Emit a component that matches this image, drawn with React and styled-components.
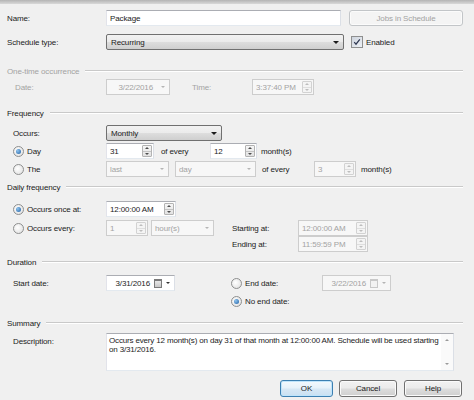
import React from 'react';
import styled, { createGlobalStyle, css } from 'styled-components';

const Global = createGlobalStyle`
  html, body { margin: 0; padding: 0; background: #f0f0f0; }
  body {
    font-family: 'Liberation Sans', Arial, sans-serif;
    font-size: 8px;
    letter-spacing: -0.12px;
    color: #1b1b1b;
  }
`;

const Dialog = styled.div`
  width: 474px;
  height: 400px;
  background: #f0f0f0;
  overflow: hidden;
  box-sizing: border-box;
`;

const TopBand = styled.div`
  height: 4px;
  background: linear-gradient(#b4b4b4, #d9d9d9);
`;

const Content = styled.div`
  display: flex;
  flex-direction: column;
  padding: 0 11px 0 7px;
`;

const Row = styled.div`
  display: flex;
  align-items: ${p => (p.$top ? 'flex-start' : 'center')};
  height: ${p => p.$h || 16}px;
  margin-top: ${p => p.$mt || 0}px;
  padding-left: ${p => p.$indent || 0}px;
  justify-content: ${p => (p.$end ? 'flex-end' : 'flex-start')};
`;

const Split = styled.div`
  display: flex;
`;

const Col = styled.div`
  display: flex;
  flex-direction: column;
  width: ${p => (p.$w ? `${p.$w}px` : 'auto')};
  flex-shrink: 0;
`;

const Label = styled.div`
  width: ${p => (p.$w ? `${p.$w}px` : 'auto')};
  margin-left: ${p => p.$ml || 0}px;
  margin-top: ${p => p.$mt || 0}px;
  flex-shrink: 0;
  white-space: nowrap;
  color: ${p => (p.$disabled ? '#a3a3a3' : '#1b1b1b')};
`;

const GroupHeader = styled.div`
  display: flex;
  align-items: center;
  height: 12px;
  margin-top: ${p => p.$mt || 0}px;
  color: ${p => (p.$disabled ? '#a3a3a3' : '#1b1b1b')};
  white-space: nowrap;
`;

const GroupLine = styled.div`
  flex: 1;
  margin-left: 6px;
  border-top: 1px solid #c9c9c9;
  border-bottom: 1px solid #ffffff;
`;

const boxBase = css`
  box-sizing: border-box;
  height: 16px;
  width: ${p => p.$w}px;
  margin-left: ${p => p.$ml || 0}px;
  flex-shrink: 0;
  display: flex;
  align-items: center;
  white-space: nowrap;
`;

const TextBox = styled.div`
  ${boxBase};
  border: 1px solid;
  border-color: ${p => (p.$disabled ? '#cdcdcd' : '#abadb3 #dbdfe6 #e3e9ef #e2e3ea')};
  background: ${p => (p.$disabled ? '#f7f7f7' : '#ffffff')};
  color: ${p => (p.$disabled ? '#a3a3a3' : '#1b1b1b')};
  padding-left: 3px;
`;

const BoxText = styled.span`
  flex: 1;
  text-align: ${p => (p.$right ? 'right' : 'left')};
  padding-right: ${p => (p.$right ? 4 : 0)}px;
  overflow: hidden;
`;

const ComboButton = styled.div`
  ${boxBase};
  border: 1px solid #707070;
  border-radius: 2px;
  background: linear-gradient(#f2f2f2 0%, #ebebeb 48%, #dddddd 52%, #cfcfcf 100%);
  padding-left: 4px;
  padding-right: 4px;
`;

const Arrow = styled.span`
  width: 0;
  height: 0;
  flex-shrink: 0;
  margin-left: ${p => p.$ml || 0}px;
  border-left: ${p => p.$s || 3}px solid transparent;
  border-right: ${p => p.$s || 3}px solid transparent;
  border-top: ${p => p.$s || 3}px solid ${p => p.$c || '#1b1b1b'};
`;

const ArrowCell = styled.span`
  width: 12px;
  align-self: stretch;
  display: flex;
  align-items: center;
  justify-content: center;
  flex-shrink: 0;
`;

const SpinBox = styled.span`
  box-sizing: border-box;
  width: 10px;
  height: 12px;
  margin-right: 1px;
  flex-shrink: 0;
  display: flex;
  flex-direction: column;
  border: 1px solid ${p => (p.$disabled ? '#d2d2d2' : '#b3b3b3')};
  border-radius: 1px;
  background: ${p => (p.$disabled ? '#f4f4f4' : 'linear-gradient(#f6f6f6, #e2e2e2)')};
`;

const SpinHalf = styled.span`
  flex: 1;
  display: flex;
  align-items: center;
  justify-content: center;
  border-top: ${p => (p.$lower ? `1px solid ${p.$disabled ? '#dedede' : '#c4c4c4'}` : 'none')};
`;

const Tri = styled.span`
  width: 0;
  height: 0;
  border-left: 2px solid transparent;
  border-right: 2px solid transparent;
  ${p =>
    p.$up
      ? `border-bottom: 2px solid ${p.$disabled ? '#bdbdbd' : '#4d4d4d'};`
      : `border-top: 2px solid ${p.$disabled ? '#bdbdbd' : '#4d4d4d'};`}
`;

const Button = styled.div`
  box-sizing: border-box;
  height: ${p => p.$h || 17}px;
  width: ${p => p.$w}px;
  margin-left: ${p => p.$ml || 0}px;
  flex-shrink: 0;
  display: flex;
  align-items: center;
  justify-content: center;
  border: 1px solid ${p => (p.$disabled ? '#c2c5c8' : p.$default ? '#3c7fb1' : '#707070')};
  border-radius: 3px;
  color: ${p => (p.$disabled ? '#a3a3a3' : '#1b1b1b')};
  background: ${p =>
    p.$disabled
      ? '#f4f4f4'
      : p.$default
      ? 'linear-gradient(#f3f9fd 0%, #e6f1fa 48%, #d7e8f5 52%, #c9e0f2 100%)'
      : 'linear-gradient(#f2f2f2 0%, #ebebeb 48%, #dddddd 52%, #cfcfcf 100%)'};
  box-shadow: ${p => (p.$default ? 'inset 0 0 0 1px #bfe4fb' : 'inset 0 0 0 1px #fbfbfb')};
`;

const CheckBox = styled.span`
  box-sizing: border-box;
  width: 12px;
  height: 12px;
  margin-left: ${p => p.$ml || 0}px;
  flex-shrink: 0;
  border: 1px solid #8e8f8f;
  background: linear-gradient(135deg, #cdd3dd, #eef1f5);
  display: flex;
  align-items: center;
  justify-content: center;
`;

const RadioItem = styled.div`
  display: flex;
  align-items: center;
  width: ${p => p.$w}px;
  flex-shrink: 0;
  white-space: nowrap;
`;

const Radio = styled.span`
  box-sizing: border-box;
  width: 11px;
  height: 11px;
  border-radius: 50%;
  margin-right: 3px;
  flex-shrink: 0;
  border: 1px solid #8e8f8f;
  background: radial-gradient(circle at 40% 40%, #ffffff, #dcdcdc);
  display: flex;
  align-items: center;
  justify-content: center;
`;

const RadioDot = styled.span`
  width: 5px;
  height: 5px;
  border-radius: 50%;
  background: radial-gradient(circle at 35% 35%, #8ec3ee, #1f5fa3);
`;

const TextArea = styled.div`
  box-sizing: border-box;
  width: ${p => p.$w}px;
  height: ${p => p.$h}px;
  flex-shrink: 0;
  display: flex;
  border: 1px solid;
  border-color: #abadb3 #dbdfe6 #e3e9ef #e2e3ea;
  background: #ffffff;
`;

const TextAreaBody = styled.div`
  flex: 1;
  padding: 2px 1px 0 2px;
  line-height: 9px;
  color: #1b1b1b;
  letter-spacing: -0.16px;
`;

const ScrollBar = styled.div`
  width: 12px;
  display: flex;
  flex-direction: column;
  justify-content: space-between;
  align-items: center;
  padding: 5px 0;
  box-sizing: border-box;
  background: #fafafa;
`;

const ScrollTri = styled.span`
  width: 0;
  height: 0;
  border-left: 2px solid transparent;
  border-right: 2px solid transparent;
  ${p => (p.$up ? 'border-bottom: 2px solid #9a9a9a;' : 'border-top: 2px solid #9a9a9a;')}
`;

const CalIcon = styled.span`
  box-sizing: border-box;
  width: 8px;
  height: 9px;
  flex-shrink: 0;
  border: 1px solid ${p => (p.$disabled ? '#c8c8c8' : '#7a7a7a')};
  background: ${p => (p.$disabled ? '#f2f2f2' : 'linear-gradient(#e8e8e8, #c8c8c8)')};
  border-top-width: 2px;
`;

const Spinner = ({ w, ml, value, disabled }) => (
  <TextBox $w={w} $ml={ml} $disabled={disabled}>
    <BoxText>{value}</BoxText>
    <SpinBox $disabled={disabled}>
      <SpinHalf>
        <Tri $up $disabled={disabled} />
      </SpinHalf>
      <SpinHalf $lower $disabled={disabled}>
        <Tri $disabled={disabled} />
      </SpinHalf>
    </SpinBox>
  </TextBox>
);

const DisabledCombo = ({ w, ml, value }) => (
  <TextBox $w={w} $ml={ml} $disabled>
    <BoxText>{value}</BoxText>
    <ArrowCell>
      <Arrow $s={2} $c="#b5b5b5" />
    </ArrowCell>
  </TextBox>
);

const Combo = ({ w, value }) => (
  <ComboButton $w={w}>
    <BoxText>{value}</BoxText>
    <Arrow $s={3} />
  </ComboButton>
);

const DatePicker = ({ w, ml, value, disabled, calendar }) => (
  <TextBox $w={w} $ml={ml} $disabled={disabled}>
    <BoxText $right>{value}</BoxText>
    {calendar && <CalIcon $disabled={disabled} />}
    <ArrowCell>
      <Arrow $s={calendar ? 2.5 : 2} $c={disabled ? '#b5b5b5' : calendar ? '#333' : '#9a9a9a'} />
    </ArrowCell>
  </TextBox>
);

const RadioOption = ({ w, checked, children }) => (
  <RadioItem $w={w}>
    <Radio>{checked && <RadioDot />}</Radio>
    {children}
  </RadioItem>
);

export default function App() {
  return (
    <Dialog>
      <Global />
      <TopBand />
      <Content>
        <Row $mt={6}>
          <Label $w={99}>Name:</Label>
          <TextBox $w={235}>
            <BoxText>Package</BoxText>
          </TextBox>
          <Button $w={114} $h={16} $ml={8} $disabled>
            Jobs in Schedule
          </Button>
        </Row>

        <Row $mt={8}>
          <Label $w={99}>Schedule type:</Label>
          <Combo w={238} value="Recurring" />
          <CheckBox $ml={7}>
            <svg width="8" height="8" viewBox="0 0 8 8">
              <path d="M1.2 4.2 L3 6.2 L6.8 1.4" fill="none" stroke="#2d3650" strokeWidth="1.2" />
            </svg>
          </CheckBox>
          <Label $ml={3}>Enabled</Label>
        </Row>

        <GroupHeader $mt={15} $disabled>
          One-time occurrence
          <GroupLine />
        </GroupHeader>
        <Row $mt={2} $indent={8}>
          <Label $w={91} $disabled>Date:</Label>
          <DatePicker w={64} value="3/22/2016" disabled />
          <Label $ml={22} $w={60} $disabled>Time:</Label>
          <Spinner w={62} value="3:37:40 PM" disabled />
        </Row>

        <GroupHeader $mt={12}>
          Frequency
          <GroupLine />
        </GroupHeader>
        <Row $mt={6} $indent={6}>
          <Label $w={93}>Occurs:</Label>
          <Combo w={116} value="Monthly" />
        </Row>
        <Row $mt={2} $indent={6}>
          <RadioOption w={93} checked>Day</RadioOption>
          <Spinner w={48} value="31" />
          <Label $ml={7} $w={49}>of every</Label>
          <Spinner w={47} value="12" />
          <Label $ml={4}>month(s)</Label>
        </Row>
        <Row $mt={2} $indent={6}>
          <RadioOption w={93}>The</RadioOption>
          <DisabledCombo w={63} value="last" />
          <DisabledCombo w={81} ml={6} value="day" />
          <Label $ml={6} $w={52}>of every</Label>
          <Spinner w={42} value="3" disabled />
          <Label $ml={5}>month(s)</Label>
        </Row>

        <GroupHeader $mt={4}>
          Daily frequency
          <GroupLine />
        </GroupHeader>
        <Row $mt={8} $indent={6}>
          <RadioOption w={93} checked>Occurs once at:</RadioOption>
          <Spinner w={70} value="12:00:00 AM" />
        </Row>
        <Split>
          <Col $w={225}>
            <Row $mt={3} $indent={6}>
              <RadioOption w={93}>Occurs every:</RadioOption>
              <Spinner w={42} value="1" disabled />
              <DisabledCombo w={63} ml={3} value="hour(s)" />
            </Row>
          </Col>
          <Col>
            <Row $mt={3}>
              <Label $w={66}>Starting at:</Label>
              <Spinner w={70} value="12:00:00 AM" disabled />
            </Row>
            <Row>
              <Label $w={66}>Ending at:</Label>
              <Spinner w={70} value="11:59:59 PM" disabled />
            </Row>
          </Col>
        </Split>

        <GroupHeader $mt={4}>
          Duration
          <GroupLine />
        </GroupHeader>
        <Split>
          <Col $w={224}>
            <Row $mt={7} $indent={6}>
              <Label $w={93}>Start date:</Label>
              <DatePicker w={69} value="3/31/2016" calendar />
            </Row>
          </Col>
          <Col>
            <Row $mt={7}>
              <RadioOption w={91}>End date:</RadioOption>
              <DatePicker w={69} value="3/22/2016" calendar disabled />
            </Row>
            <Row $mt={2}>
              <RadioOption w={91} checked>No end date:</RadioOption>
            </Row>
          </Col>
        </Split>

        <GroupHeader $mt={8}>
          Summary
          <GroupLine />
        </GroupHeader>
        <Row $mt={4} $indent={6} $h={38} $top>
          <Label $w={93} $mt={4}>Description:</Label>
          <TextArea $w={348} $h={38}>
            <TextAreaBody>
              Occurs every 12 month(s) on day 31 of that month at 12:00:00 AM. Schedule will be used starting
              on 3/31/2016.
            </TextAreaBody>
            <ScrollBar>
              <ScrollTri $up />
              <ScrollTri />
            </ScrollBar>
          </TextArea>
        </Row>

        <Row $mt={9} $h={17} $end>
          <Button $w={53} $default>OK</Button>
          <Button $w={58} $ml={6}>Cancel</Button>
          <Button $w={58} $ml={7}>Help</Button>
          <Label $w={1} />
        </Row>
      </Content>
    </Dialog>
  );
}
